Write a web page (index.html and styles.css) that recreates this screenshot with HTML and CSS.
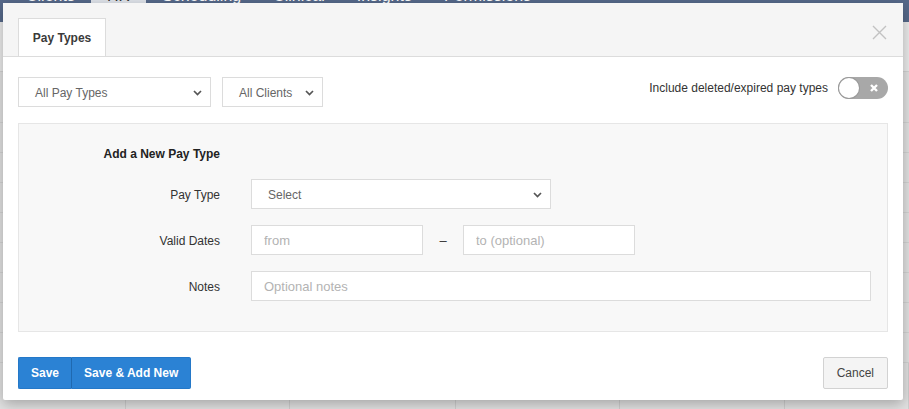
FILE: index.html
```html
<!DOCTYPE html>
<html lang="en">
<head>
    <meta charset="UTF-8">
    <title>Pay Types</title>
    <link rel="stylesheet" href="styles.css">
</head>
<body>

    <div class="page">
        <div class="topnav">
            <span class="nav-item">Clients</span>
            <span class="nav-item active">HR</span>
            <span class="nav-item">Scheduling</span>
            <span class="nav-item">Clinical</span>
            <span class="nav-item">Insights</span>
            <span class="nav-item">Permissions</span>
        </div>
        <div class="subbar"></div>
        <div class="bg-table">
            <div class="bg-head"></div>
            <div class="bg-row"></div>
            <div class="bg-row"></div>
            <div class="bg-row"></div>
            <div class="bg-row"></div>
            <div class="bg-row"></div>
            <div class="bg-row"></div>
            <div class="bg-row"></div>
            <div class="bg-row"></div>
            <div class="bg-row cells">
                <span></span><span></span><span></span><span></span><span></span><span></span>
            </div>
        </div>
    </div>

    <div class="modal">
        <div class="modal-header">
            <div class="tab">Pay Types</div>
            <span class="close">
                <svg width="15" height="15" viewBox="0 0 15 15"><path d="M1 1L14 14M14 1L1 14" stroke="#c2c2c2" stroke-width="1.4" fill="none"/></svg>
            </span>
        </div>

        <div class="modal-body">
            <div class="filters">
                <div class="select wide">
                    <span>All Pay Types</span>
                    <svg class="chev" width="9" height="6" viewBox="0 0 9 6"><path d="M1 1L4.5 4.5L8 1" stroke="#555" stroke-width="1.7" fill="none"/></svg>
                </div>
                <div class="select narrow">
                    <span>All Clients</span>
                    <svg class="chev" width="9" height="6" viewBox="0 0 9 6"><path d="M1 1L4.5 4.5L8 1" stroke="#555" stroke-width="1.7" fill="none"/></svg>
                </div>
                <div class="include">
                    <span>Include deleted/expired pay types</span>
                    <div class="toggle">
                        <span class="knob"></span>
                        <svg class="toggle-x" width="10" height="10" viewBox="0 0 10 10"><path d="M2 2L8 8M8 2L2 8" stroke="#fff" stroke-width="2.4" fill="none"/></svg>
                    </div>
                </div>
            </div>

            <div class="panel">
                <div class="panel-title">Add a New Pay Type</div>
                <div></div>

                <label class="field-label">Pay Type</label>
                <div class="select paytype">
                    <span>Select</span>
                    <svg class="chev" width="9" height="6" viewBox="0 0 9 6"><path d="M1 1L4.5 4.5L8 1" stroke="#555" stroke-width="1.7" fill="none"/></svg>
                </div>

                <label class="field-label">Valid Dates</label>
                <div class="dates">
                    <input class="input date" type="text" placeholder="from">
                    <span class="dash">–</span>
                    <input class="input date" type="text" placeholder="to (optional)">
                </div>

                <label class="field-label">Notes</label>
                <input class="input notes" type="text" placeholder="Optional notes">
            </div>
        </div>

        <div class="modal-footer">
            <div class="btn-group">
                <button class="btn primary">Save</button>
                <button class="btn primary">Save &amp; Add New</button>
            </div>
            <button class="btn default">Cancel</button>
        </div>
    </div>

</body>
</html>
```

FILE: styles.css
```css
body {
    margin: 0;
    font-family: "Liberation Sans", Arial, sans-serif;
    font-size: 12px;
    color: #333;
    background-color: #e2e2e2;
    overflow: hidden;
}

/* page behind the dialog */
.page {
    height: 409px;
}
.topnav {
    height: 22px;
    background-color: #56698a;
    display: flex;
    padding-left: 10px;
    overflow: hidden;
}
.nav-item {
    color: #fff;
    font-size: 16px;
    line-height: 16px;
    margin-top: -12px;
    padding: 0 16px;
    height: 34px;
}
.nav-item.active {
    background-color: #dfe3ea;
    color: #333;
}
.subbar {
    height: 49px;
    background-color: #ebebeb;
    border-bottom: 1px solid #d4d4d4;
}
.bg-head {
    height: 50px;
    border-bottom: 1px solid #d4d4d4;
}
.bg-row {
    height: 29px;
    border-bottom: 1px solid #d4d4d4;
}
.cells {
    display: grid;
    grid-template-columns: 126px 164px 166px 164px 165px 1fr;
    height: 60px;
}
.cells span {
    border-right: 1px solid #cfcfcf;
}

/* dialog */
.modal {
    position: absolute;
    left: 3px;
    top: 3px;
    width: 900px;
    background-color: #fff;
    box-shadow: 0 4px 14px rgba(0, 0, 0, 0.28);
    border-radius: 2px;
}
.modal-header {
    height: 38px;
    padding: 15px 16px 0 15px;
    background-color: #f5f5f5;
    border-bottom: 1px solid #dcdcdc;
    display: flex;
    justify-content: space-between;
    align-items: flex-start;
}
.tab {
    width: 88px;
    box-sizing: border-box;
    height: 38px;
    line-height: 38px;
    text-align: center;
    background-color: #fff;
    border: 1px solid #dcdcdc;
    border-bottom: none;
    font-size: 12px;
    font-weight: bold;
    color: #3a3a3a;
}
.close {
    margin-top: 7px;
    cursor: pointer;
}

.modal-body {
    padding: 20px 15px 0 15px;
}
.filters {
    display: flex;
    align-items: flex-start;
    gap: 11px;
}
.select {
    height: 30px;
    box-sizing: border-box;
    border: 1px solid #dcdcdc;
    background-color: #fff;
    display: flex;
    align-items: center;
    justify-content: space-between;
    padding: 1px 8px 0 16px;
    font-size: 12px;
    color: #666;
}
.select.wide {
    width: 193px;
}
.select.narrow {
    width: 101px;
}
.select.paytype {
    width: 300px;
}
.include {
    margin-left: auto;
    display: flex;
    align-items: center;
    gap: 10px;
    height: 22px;
    color: #333;
}
.toggle {
    width: 50px;
    height: 22px;
    border-radius: 11px;
    background-color: #a8a8a8;
    display: flex;
    align-items: center;
    justify-content: space-between;
    padding: 0 9px 0 1px;
    box-sizing: border-box;
}
.knob {
    width: 20px;
    height: 20px;
    border-radius: 50%;
    background-color: #fff;
    box-shadow: 0 0 0 1px #9a9a9a;
}

.panel {
    margin-top: 16px;
    padding: 22px 16px 30px 0;
    background-color: #f8f8f8;
    border: 1px solid #e6e6e6;
    display: grid;
    grid-template-columns: 201px 1fr;
    column-gap: 31px;
    row-gap: 16px;
    align-items: center;
}
.panel-title {
    text-align: right;
    font-weight: bold;
    line-height: 17px;
    color: #222;
}
.field-label {
    text-align: right;
    color: #333;
    padding-top: 1px;
}
.input {
    height: 30px;
    box-sizing: border-box;
    border: 1px solid #dcdcdc;
    background-color: #fff;
    padding: 0 12px;
    font-family: inherit;
    font-size: 13px;
    color: #333;
    outline: none;
}
.input::placeholder {
    color: #b3b3b3;
}
.dates {
    display: flex;
    align-items: center;
}
.date {
    width: 172px;
}
.dash {
    width: 40px;
    text-align: center;
    color: #333;
    font-size: 13px;
}
.notes {
    width: 100%;
}

.modal-footer {
    padding: 25px 15px 11px 15px;
    display: flex;
    justify-content: space-between;
}
.btn-group {
    display: flex;
}
.btn {
    height: 32px;
    font-family: inherit;
    font-size: 12px;
    padding: 0 12px;
    cursor: pointer;
    border-radius: 2px;
}
.btn.primary {
    background-color: #2b82d4;
    color: #fff;
    border: 1px solid #2478c8;
    font-weight: bold;
}
.btn-group .btn:first-child {
    border-radius: 2px 0 0 2px;
    border-right: 1px solid #1f69b0;
}
.btn-group .btn:last-child {
    border-radius: 0 2px 2px 0;
    border-left: none;
}
.btn.default {
    background-color: #f4f4f4;
    color: #444;
    border: 1px solid #d2d2d2;
    padding: 0 13px;
}
```
